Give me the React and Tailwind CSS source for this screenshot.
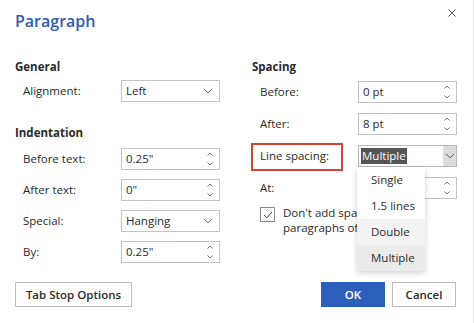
import React from 'react';

const Chevron = () => (
  <svg width="10" height="6" viewBox="0 0 10 6" fill="none" stroke="#555" strokeWidth="1">
    <path d="M1 0.8 L5 4.8 L9 0.8" />
  </svg>
);

const Spin = () => (
  <div className="flex flex-col items-center justify-between h-[14px]">
    <svg width="6" height="4" viewBox="0 0 6 4" fill="none" stroke="#666" strokeWidth="0.9">
      <path d="M0.5 3.5 L3 1 L5.5 3.5" />
    </svg>
    <svg width="6" height="4" viewBox="0 0 6 4" fill="none" stroke="#666" strokeWidth="0.9">
      <path d="M0.5 0.5 L3 3 L5.5 0.5" />
    </svg>
  </div>
);

const Field = ({ value, kind }) => (
  <div className="w-[99px] h-[22px] border border-[#c4c4c4] bg-white flex items-center justify-between pl-[4px] pr-[6px]">
    <span>{value}</span>
    {kind === 'select' ? <Chevron /> : <Spin />}
  </div>
);

const Row = ({ label, children }) => (
  <div className="flex items-center h-[22px]">
    <span className="w-[106px] pl-[8px]">{label}</span>
    {children}
  </div>
);

export default function App() {
  const font = { fontFamily: '"Open Sans", "Noto Sans", sans-serif' };
  return (
    <div
      style={font}
      className="w-[474px] h-[323px] bg-white border-r border-[#e4e4e4] text-[11.5px] text-[#2a2a2a] px-[15px] pt-[5px] relative overflow-hidden"
    >
      {/* header */}
      <div className="flex items-start justify-between h-[32px]">
        <span className="text-[16px] font-semibold text-[#2f5cb4] mt-[4px]">Paragraph</span>
        <svg width="8" height="8" viewBox="0 0 8 8" stroke="#555" strokeWidth="1" className="mt-[4px] mr-[2px]">
          <path d="M0.5 0.5 L7.5 7.5 M7.5 0.5 L0.5 7.5" />
        </svg>
      </div>

      <div className="flex gap-[32px] mt-[22px]">
        {/* left column */}
        <div className="w-[205px] flex flex-col">
          <div className="font-bold h-[16px] leading-[16px]">General</div>
          <div className="mt-[5px]">
            <Row label="Alignment:"><Field value="Left" kind="select" /></Row>
          </div>
          <div className="font-bold h-[16px] leading-[16px] mt-[23px]">Indentation</div>
          <div className="flex flex-col gap-[9px] mt-[7px]">
            <Row label="Before text:"><Field value={'0.25"'} /></Row>
            <Row label="After text:"><Field value={'0"'} /></Row>
            <Row label="Special:"><Field value="Hanging" kind="select" /></Row>
            <Row label="By:"><Field value={'0.25"'} /></Row>
          </div>
        </div>

        {/* right column */}
        <div className="w-[205px] flex flex-col">
          <div className="font-bold h-[16px] leading-[16px]">Spacing</div>
          <div className="flex flex-col gap-[10px] mt-[6px]">
            <Row label="Before:"><Field value="0 pt" /></Row>
            <Row label="After:"><Field value="8 pt" /></Row>
            <div className="relative flex items-center h-[22px]">
              <span className="w-[106px] pl-[8px]">Line spacing:</span>
              <div className="absolute left-[-1px] top-[-2px] w-[92px] h-[28px] border-2 border-[#d8402f]" />
              <div className="relative w-[99px] h-[22px] border border-[#b8b8b8] bg-white flex items-center">
                <span className="ml-[2px] bg-[#555555] text-white px-[1px] h-[16px] leading-[16px]">Multiple</span>
                <div className="ml-auto w-[13px] h-full bg-[#dcdcdc] flex items-center justify-center">
                  <Chevron />
                </div>
                {/* dropdown */}
                <div className="absolute left-[-2px] top-[21px] w-[68px] bg-white shadow-[0_2px_6px_rgba(0,0,0,0.18)] z-10 flex flex-col">
                  <div className="h-[26px] flex items-center pl-[14px]">Single</div>
                  <div className="h-[26px] flex items-center pl-[14px]">1.5 lines</div>
                  <div className="h-[26px] flex items-center pl-[14px] bg-[#f3f3f3]">Double</div>
                  <div className="h-[26px] flex items-center pl-[14px] bg-[#ebebeb]">Multiple</div>
                </div>
              </div>
            </div>
            <Row label="At:"><Field value="" /></Row>
          </div>
          <div className="flex items-start mt-[6px] pl-[8px]">
            <div className="w-[15px] h-[15px] border border-[#8a8a8a] flex items-center justify-center mt-[2px]">
              <svg width="10" height="8" viewBox="0 0 10 8" fill="none" stroke="#333" strokeWidth="1">
                <path d="M1 4 L3.8 6.8 L9 1" />
              </svg>
            </div>
            <div className="ml-[8px] leading-[15px] w-[74px] overflow-hidden whitespace-nowrap">
              <div>Don't add space between</div>
              <div>paragraphs of the same style</div>
            </div>
          </div>
        </div>
      </div>

      {/* buttons */}
      <div className="flex items-center mt-[19px]">
        <button className="w-[117px] h-[25px] border border-[#bdbdbd] bg-white font-semibold text-[11.5px]">
          Tab Stop Options
        </button>
        <div className="ml-auto flex gap-[7px] mr-[2px]">
          <button className="w-[64px] h-[25px] bg-[#2c5fbc] text-white font-semibold text-[11.5px]">OK</button>
          <button className="w-[64px] h-[25px] border border-[#bdbdbd] bg-white font-semibold text-[11.5px]">Cancel</button>
        </div>
      </div>
    </div>
  );
}
